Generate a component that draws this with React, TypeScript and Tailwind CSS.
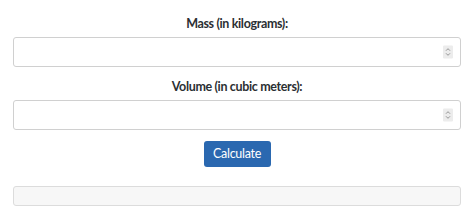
import React, { useState } from 'react';

function Spinner() {
  return (
    <div className="pointer-events-none absolute right-[8px] top-1/2 -translate-y-1/2 flex h-[13px] w-[10px] items-center justify-center rounded-[1px] bg-[#ececec]">
      <svg width="6" height="9" viewBox="0 0 6 9" fill="none" stroke="#8a8a8a" strokeWidth="0.9">
        <path d="M1 3.2 L3 1.2 L5 3.2" />
        <path d="M1 5.8 L3 7.8 L5 5.8" />
      </svg>
    </div>
  );
}

function Field({ label, value, onChange }: { label: string; value: string; onChange: (v: string) => void }) {
  return (
    <div className="flex flex-col items-center">
      <label className="mb-[3px] text-[12.5px] font-bold leading-[20px] tracking-[-0.35px] text-[#2b2f33]">{label}</label>
      <div className="relative w-full">
        <input
          type="text"
          value={value}
          onChange={e => onChange(e.target.value)}
          className="block h-[30px] w-full rounded-[3px] border border-[#d0d0d0] bg-white px-3 text-[13px] text-[#212529] outline-none"
        />
        <Spinner />
      </div>
    </div>
  );
}

export default function App() {
  const [mass, setMass] = useState('');
  const [volume, setVolume] = useState('');
  const [result, setResult] = useState('');

  const calculate = () => {
    const m = parseFloat(mass);
    const v = parseFloat(volume);
    if (!isNaN(m) && !isNaN(v) && v !== 0) setResult(`Density: ${(m / v).toFixed(2)} kg/m³`);
  };

  return (
    <div className="w-[474px] h-[219px] bg-white px-[13px] pt-[14px]" style={{ fontFamily: 'Lato, "Open Sans", sans-serif' }}>
      <div className="flex flex-col gap-[10px]">
        <Field label="Mass (in kilograms):" value={mass} onChange={setMass} />
        <Field label="Volume (in cubic meters):" value={volume} onChange={setVolume} />
      </div>
      <div className="mt-[11px] flex justify-center">
        <button
          onClick={calculate}
          className="h-[26px] w-[67px] rounded-[3px] bg-[#2a68b0] text-[12.5px] leading-[26px] tracking-[-0.3px] text-white"
        >
          Calculate
        </button>
      </div>
      <div className="mt-[19px] h-[20px] rounded-[3px] border border-[#dcdcdc] bg-[#f7f7f7] px-2 text-[12px] leading-[18px] text-[#212529]">
        {result}
      </div>
    </div>
  );
}
